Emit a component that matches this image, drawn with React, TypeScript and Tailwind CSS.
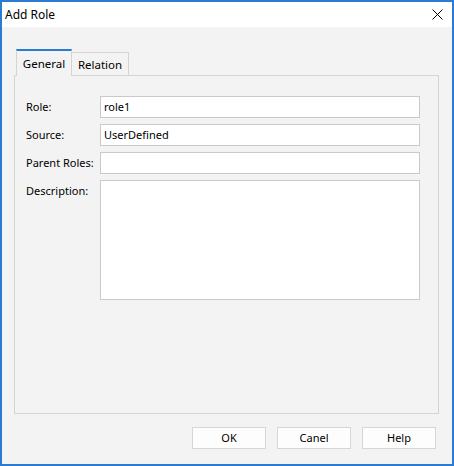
const font = { fontFamily: '"Noto Sans", "Open Sans", sans-serif' };

function Field({ label, value, tall }: { label: string; value?: string; tall?: boolean }) {
    return (
        <>
            <label className={`text-[11px] text-black leading-[22px] ${tall ? 'self-start' : ''}`}>{label}</label>
            <div
                className={`border border-[#c9c9c9] bg-white px-[3px] text-[11px] text-black leading-[20px] ${tall ? 'h-[120px]' : 'h-[22px]'}`}
            >
                {value}
            </div>
        </>
    );
}

export default function App() {
    return (
        <div className="w-[454px] h-[466px] border-2 border-[#2b7bd3] bg-[#f3f3f3] flex flex-col" style={font}>
            <div className="h-[25px] bg-white flex items-center justify-between pl-[3px] pr-[9px]">
                <span className="text-[12px] text-black">Add Role</span>
                <svg width="11" height="11" viewBox="0 0 11 11" className="text-black">
                    <path d="M0.5 0.5 L10.5 10.5 M10.5 0.5 L0.5 10.5" stroke="currentColor" strokeWidth="1" fill="none" />
                </svg>
            </div>

            <div className="flex-1 flex flex-col px-[12px] pt-[22px]">
                <div className="flex items-end pl-[2px] h-[26px]">
                    <div className="relative z-10 -mb-px h-[27px] w-[56px] border-x border-[#d4d4d4] border-t-2 border-t-[#2b7bd3] bg-[#f3f3f3] flex items-center justify-center text-[11.5px] text-black">
                        General
                    </div>
                    <div className="h-[23px] w-[57px] border-r border-t border-[#d4d4d4] bg-[#f3f3f3] flex items-center justify-center pt-[2px] text-[11.5px] text-black">
                        Relation
                    </div>
                </div>

                <div className="w-[425px] h-[339px] border border-[#d4d4d4] pt-[20px] pl-[11px]">
                    <div className="grid grid-cols-[74px_320px] gap-y-[6px]">
                        <Field label="Role:" value="role1" />
                        <Field label="Source:" value="UserDefined" />
                        <Field label="Parent Roles:" />
                        <Field label="Description:" tall />
                    </div>
                </div>

                <div className="flex justify-end gap-[11px] pr-[4px] mt-[13px]">
                    {['OK', 'Canel', 'Help'].map((b) => (
                        <button
                            key={b}
                            className="w-[74px] h-[22px] border border-[#d6d6d6] bg-[#fdfdfd] text-[11px] text-black"
                        >
                            {b}
                        </button>
                    ))}
                </div>
            </div>
        </div>
    );
}
